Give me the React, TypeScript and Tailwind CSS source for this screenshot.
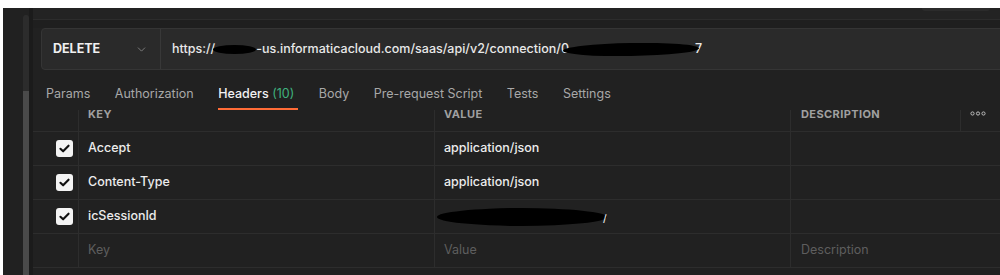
import { ChevronDown } from "lucide-react";

const font = { fontFamily: "Inter, 'Noto Sans', sans-serif" };

function Check() {
  return (
    <div className="flex h-[17px] w-[17px] items-center justify-center rounded-[3px] bg-[#f4f4f4]">
      <svg viewBox="0 0 16 16" className="h-[13px] w-[13px]">
        <path d="M3 8.4 6.3 11.5 13 4.6" fill="none" stroke="#111" strokeWidth="2.6" strokeLinecap="round" strokeLinejoin="round" />
      </svg>
    </div>
  );
}

function Blob({ className }: { className: string }) {
  return <span className={"inline-block rounded-[50%] bg-black align-middle " + className} />;
}

const rows = [
  { key: "Accept", value: "application/json", hidden: false },
  { key: "Content-Type", value: "application/json", hidden: false },
  { key: "icSessionId", value: "", hidden: true },
];

export default function App() {
  return (
    <div className="flex h-[275px] w-[1000px] flex-col overflow-hidden bg-white text-[13px]" style={font}>
      <div className="h-[8px] shrink-0 bg-white" />
      <div className="flex min-h-0 flex-1">
        <div className="w-[3px] bg-white" />
        <div className="w-[20px] bg-[#212121]" />
        {/* scrollbar */}
        <div className="flex w-[6px] flex-col bg-[#212121] pt-[7px]">
          <div className="h-[76px] rounded-t-full bg-[#2c2c2c]" />
          <div className="flex-1 bg-[#4a4a4a]" />
        </div>
        <div className="w-[4px] bg-[#1b1b1b]" />

        <main className="flex min-w-0 flex-1 flex-col bg-[#212121]">
          <div className="flex h-[12px] shrink-0 justify-end border-b border-[#2c2c2c] bg-[#232323] pr-[10px]">
            <div className="h-[3px] w-[68px] rounded-b-[3px] bg-[#2b2b2b]" />
          </div>
          <div className="h-[8px] shrink-0 bg-[#1f1f1f]" />

          {/* request bar */}
          <div className="ml-[8px] flex h-[42px] w-[980px] shrink-0 items-center rounded-[4px] border border-[#353535] bg-[#2a2a2a]">
            <div className="flex h-full w-[119px] shrink-0 items-center justify-between border-r border-[#383838] pl-[11px] pr-[12px]">
              <span className="text-[12.5px] font-bold text-[#f0f0f0]">DELETE</span>
              <ChevronDown className="h-[13px] w-[13px] text-[#8c8c8c]" strokeWidth={1.5} />
            </div>
            <div className="flex flex-1 items-center whitespace-nowrap pl-[11px] text-[12.5px] font-medium text-[#e8e8e8]">
              <span>https://</span>
              <Blob className="-ml-[2px] h-[9px] w-[43px]" />
              <span>-us.informaticacloud.com/saas/api/v2/connection/0</span>
              <Blob className="-ml-[6px] h-[13px] w-[136px] -rotate-1" />
              <span className="-ml-[4px]">7</span>
            </div>
            <div className="mr-[-1px] mt-[2px] h-[20px] w-[5px] self-start rounded-l-full bg-[#9a9a9a]" />
          </div>

          {/* tabs */}
          <div className="flex h-[40px] shrink-0 items-end gap-[24.5px] pl-[13px] text-[12.5px] text-[#a8a8a8]">
            {["Params", "Authorization"].map((t) => (
              <div key={t} className="flex flex-col">
                <span className="leading-[16px]">{t}</span>
                <div className="mt-[6px] h-[2px]" />
              </div>
            ))}
            <div className="flex flex-col">
              <span className="leading-[16px] text-[#f2f2f2]">
                <span className="font-medium">Headers</span> <span className="text-[#3fb27f]">(10)</span>
              </span>
              <div className="-mr-[4px] mt-[6px] h-[2px] bg-[#ff6c37]" />
            </div>
            {["Body", "Pre-request Script", "Tests", "Settings"].map((t) => (
              <div key={t} className="flex flex-col">
                <span className="leading-[16px]">{t}</span>
                <div className="mt-[6px] h-[2px]" />
              </div>
            ))}
          </div>

          {/* table header, partly scrolled under the tabs */}
          <div className="flex h-[22px] shrink-0 overflow-hidden border-b border-[#2d2d2d] text-[11px] font-bold uppercase tracking-[0.4px] text-[#a0a0a0]">
            <div className="w-[46px] shrink-0 border-r border-[#2d2d2d]" />
            <div className="-mt-[1px] w-[356px] shrink-0 border-r border-[#2d2d2d] pl-[9px] leading-[11px]">Key</div>
            <div className="-mt-[1px] w-[356px] shrink-0 border-r border-[#2d2d2d] pl-[9px] leading-[11px]">Value</div>
            <div className="-mt-[1px] w-[170px] shrink-0 border-r border-[#2d2d2d] pl-[10px] leading-[11px]">Description</div>
            <div className="flex flex-1 justify-center pr-[6px] pt-[1px]">
              <svg viewBox="0 0 16 5" className="h-[5px] w-[16px]">
                <circle cx="2.5" cy="2.5" r="1.6" fill="none" stroke="#bdbdbd" strokeWidth="1" />
                <circle cx="8" cy="2.5" r="1.6" fill="none" stroke="#bdbdbd" strokeWidth="1" />
                <circle cx="13.5" cy="2.5" r="1.6" fill="none" stroke="#bdbdbd" strokeWidth="1" />
              </svg>
            </div>
          </div>

          {rows.map((r) => (
            <div key={r.key} className="flex h-[34px] shrink-0 items-stretch border-b border-[#2d2d2d] text-[12.5px] font-medium text-[#ececec]">
              <div className="flex w-[46px] shrink-0 items-center border-r border-[#2d2d2d] pl-[23px]">
                <Check />
              </div>
              <div className="flex w-[356px] shrink-0 items-center border-r border-[#2d2d2d] pl-[9px]">{r.key}</div>
              <div className="flex w-[356px] shrink-0 items-center border-r border-[#2d2d2d] pl-[2px]">
                {r.hidden ? (
                  <>
                    <Blob className="h-[18px] w-[170px]" />
                    <span className="-ml-[4px] mt-[3px] text-[10px]">/</span>
                  </>
                ) : (
                  <span className="pl-[7px]">{r.value}</span>
                )}
              </div>
              <div className="w-[170px] shrink-0" />
            </div>
          ))}

          <div className="flex h-[34px] shrink-0 items-stretch border-b border-[#2d2d2d] text-[12.5px] text-[#5e5e5e]">
            <div className="w-[46px] shrink-0 border-r border-[#2d2d2d]" />
            <div className="flex w-[356px] shrink-0 items-center border-r border-[#2d2d2d] pl-[9px]">Key</div>
            <div className="flex w-[356px] shrink-0 items-center border-r border-[#2d2d2d] pl-[9px]">Value</div>
            <div className="flex w-[170px] shrink-0 items-center pl-[10px]">Description</div>
          </div>
        </main>
      </div>
    </div>
  );
}
